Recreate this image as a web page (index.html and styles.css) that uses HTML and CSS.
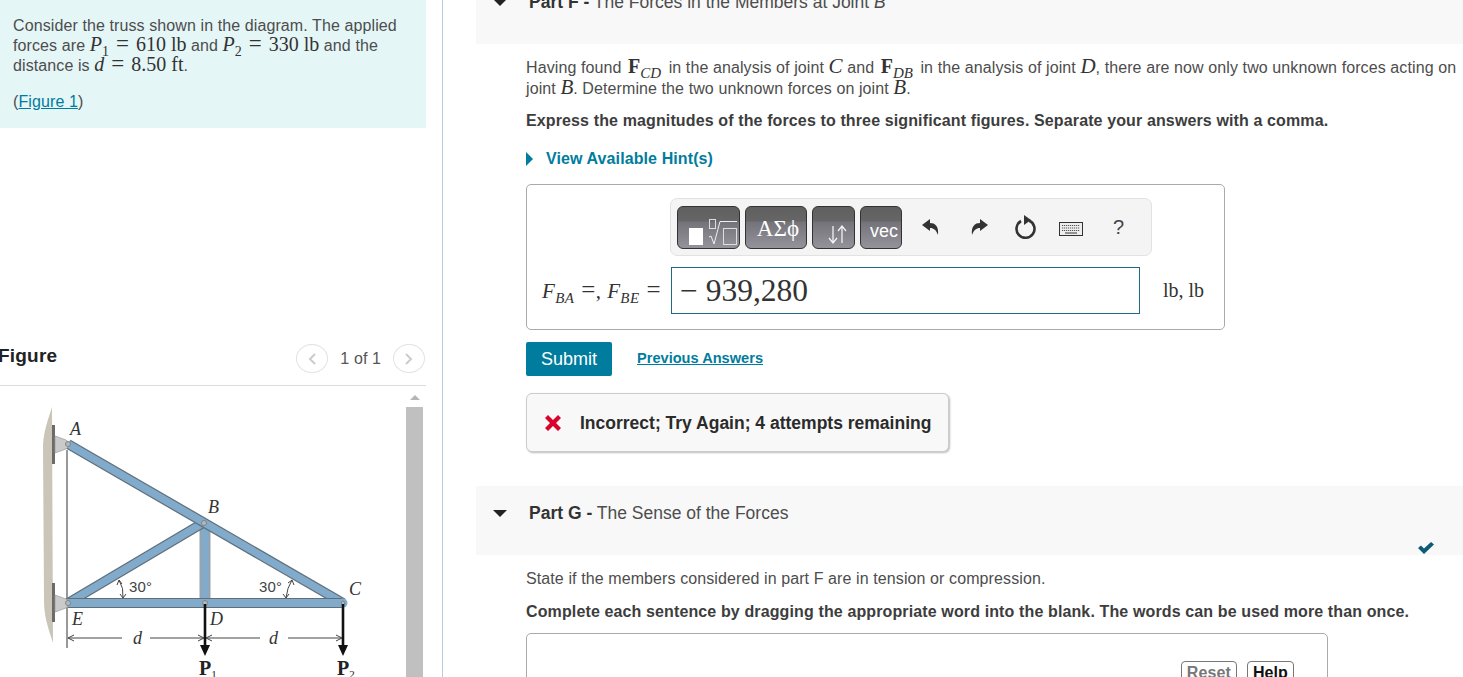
FILE: index.html
```html
<!DOCTYPE html>
<html>
<head>
<meta charset="utf-8" />
<title>Truss - Part F</title>
<link rel="stylesheet" href="styles.css">
</head>
<body>
<div class="page">

<div class="left">
  <div class="intro">
    <p>Consider the truss shown in the diagram. The applied forces are <span class="m"><i>P</i><sub>1</sub><span class="eq">=</span>610 lb</span> and <span class="m"><i>P</i><sub>2</sub><span class="eq">=</span>330 lb</span> and the distance is <span class="m"><i>d</i><span class="eq">=</span>8.50 ft</span>.</p>
    <p class="fig_link">(<a href="#">Figure 1</a>)</p>
  </div>
  <div class="fig_head">
    <h2>Figure</h2>
    <div class="pager">
      <span class="circle"><svg width="10" height="14" viewBox="0 0 10 14"><path d="M8 2 L3 7 L8 12" /></svg></span>
      <span class="count">1 of 1</span>
      <span class="circle"><svg width="10" height="14" viewBox="0 0 10 14"><path d="M2 2 L7 7 L2 12" /></svg></span>
    </div>
  </div>
  <div class="fig_body">
    <svg class="truss" width="406" height="291" viewBox="0 386 406 291">
      <!-- wall -->
      <path d="M52 407 L53 643 C47 625 44 615 44 600 L43 445 C44 430 48 420 52 407 Z" fill="#c9c5b8" />
      <rect x="52" y="425" width="3" height="39" fill="#6b6b6b" />
      <rect x="52" y="583" width="3" height="39" fill="#6b6b6b" />
      <!-- thin lines -->
      <line x1="67" y1="450" x2="67" y2="648" stroke="#333" stroke-width="1" />
      <!-- members -->
      <g fill="none" stroke-linecap="butt">
        <path d="M205 523 V603" stroke="#98a2a8" stroke-width="11" />
        <path d="M205 523 V603" stroke="#81aacb" stroke-width="7.500" />
        <path d="M68 603 L203 523" stroke="#5f6f7a" stroke-width="10" />
        <path d="M68 603 L203 523" stroke="#81aacb" stroke-width="7.600" />
        <path d="M68 444 L343 603" stroke="#5f6f7a" stroke-width="10" />
        <path d="M68 444 L343 603" stroke="#81aacb" stroke-width="7.600" />
        <path d="M68 603 H343" stroke="#5f6f7a" stroke-width="10" />
        <path d="M68 603 H343" stroke="#81aacb" stroke-width="8" />
      </g>
      <circle cx="343" cy="603" r="4.500" fill="#81aacb" />
      <path d="M55 436 L66 440 L71 444 L66 449 L55 453 Z" fill="#c9cbcb" stroke="#9a9a9a" stroke-width=".7" />
      <path d="M55 595 L66 599 L71 603 L66 608 L55 612 Z" fill="#c9cbcb" stroke="#9a9a9a" stroke-width=".7" />
      <g fill="#b5b9bb" stroke="#7d8487" stroke-width="1">
        <circle cx="68" cy="444" r="2.500" />
        <circle cx="68" cy="603" r="2.500" />
        <circle cx="204" cy="523" r="2.500" />
        <circle cx="205" cy="603" r="2.500" />
        <circle cx="343" cy="603" r="1.800" />
      </g>
      <!-- loads -->
      <g stroke="#111" stroke-width="2.600">
        <line x1="205" y1="604" x2="205" y2="648" />
        <line x1="343" y1="604" x2="343" y2="648" />
      </g>
      <path d="M200 645 H210 L205 656 Z" fill="#111" />
      <path d="M338 645 H348 L343 656 Z" fill="#111" />
      <!-- dimensions -->
      <g stroke="#444" stroke-width="1" fill="none">
        <path d="M68 638 H122 M150 638 H204 M206 638 H260 M288 638 H342" />
        <path d="M74 635 L68 638 L74 641 M198 635 L204 638 L198 641 M212 635 L206 638 L212 641 M336 635 L342 638 L336 641" />
        <path d="M119 580 Q124 588 123 598 M119 580 L117 585 M119 580 L122 584 M123 598 L120 594 M123 598 L126 594" />
        <path d="M292 580 Q287 588 286 598 M292 580 L288 583 M292 580 L294 585 M286 598 L283 594 M286 598 L289 594" />
      </g>
      <g class="lbl">
        <text x="70" y="435">A</text>
        <text x="208" y="513">B</text>
        <text x="349" y="595">C</text>
        <text x="210" y="625">D</text>
        <text x="72" y="625">E</text>
        <text x="133" y="644">d</text>
        <text x="269" y="644">d</text>
      </g>
      <g class="deg">
        <text x="129" y="592">30°</text>
        <text x="259" y="592">30°</text>
      </g>
      <g class="load">
        <text x="199" y="675">P<tspan class="ls" dy="3">1</tspan></text>
        <text x="337" y="675">P<tspan class="ls" dy="3">2</tspan></text>
      </g>
    </svg>
    <div class="scrollbar">
      <div class="up"></div>
      <div class="thumb"></div>
    </div>
  </div>
</div>

<div class="right">
  <div class="part_head">
    <span class="caret"></span>
    <span class="part_title"><b>Part F -</b> The Forces in the Members at Joint <i>B</i></span>
  </div>
  <div class="part_body">
    <p class="txt">Having found <span class="m vec_f"><b>F</b><sub><i>CD</i></sub></span> in the analysis of joint <span class="m big"><i>C</i></span> and <span class="m vec_f"><b>F</b><sub><i>DB</i></sub></span> in the analysis of joint <span class="m big"><i>D</i></span>, there are now only two unknown forces acting on joint <span class="m big"><i>B</i></span>. Determine the two unknown forces on joint <span class="m big"><i>B</i></span>.</p>
    <p class="instr">Express the magnitudes of the forces to three significant figures. Separate your answers with a comma.</p>
    <p class="hint"><span class="hint_arrow"></span><a href="#">View Available Hint(s)</a></p>

    <div class="answer">
      <div class="toolbar">
        <span class="tbtn w1">
          <svg width="61" height="41" viewBox="0 0 61 41">
            <rect x="11" y="21" width="14" height="17" fill="#fff" />
            <rect x="31.500" y="12.500" width="6" height="9" fill="none" stroke="#ddd" stroke-width="1" />
            <path d="M31 30 L33 29 L36 37 L42 14.500 H59" fill="none" stroke="#eee" stroke-width="1" />
            <rect x="45.500" y="21.500" width="13" height="16" fill="none" stroke="#ddd" stroke-width="1" />
          </svg>
        </span>
        <span class="tbtn w2"><span class="greek">ΑΣϕ</span></span>
        <span class="tbtn w3">
          <svg width="41" height="41" viewBox="0 0 41 41">
            <path d="M20 19 V36 M16 31 L20 36 L24 31 M29 36 V19 M25 24 L29 19 L33 24" fill="none" stroke="#f2f2f2" stroke-width="1.300" />
          </svg>
        </span>
        <span class="tbtn w4"><span class="vec">vec</span></span>
        <div class="tools">
          <svg class="tool" width="20" height="20" viewBox="0 0 20 20"><path d="M1 8 L9 2 V6 C14 6 18 9 17 18 C15 13 13 11 9 11 V14 Z" /></svg>
          <svg class="tool" width="20" height="20" viewBox="0 0 20 20"><path d="M19 8 L11 2 V6 C6 6 2 9 3 18 C5 13 7 11 11 11 V14 Z" /></svg>
          <svg class="tool" width="24" height="26" viewBox="0 0 24 26"><path class="ring" d="M15 6.500 A9 9 0 1 1 7 7" /><path d="M10 1 L17 6 L10 11 Z" /></svg>
          <svg class="tool kbd" width="24" height="16" viewBox="0 0 24 16">
            <rect x=".5" y="1.500" width="23" height="13" fill="#eee" stroke="#333" />
            <path d="M3 4.500 H21 M3 7 H21 M3 9.500 H21" stroke="#555" stroke-width="1.200" stroke-dasharray="1.200 .8" />
            <path d="M6 12 H18" stroke="#555" stroke-width="1.200" />
          </svg>
          <span class="qmark">?</span>
        </div>
      </div>
      <div class="input_row">
        <span class="math_label"><i>F</i><sub><i>BA</i></sub><span class="eq">=</span>, <i>F</i><sub><i>BE</i></sub><span class="eq">=</span></span>
        <div class="math_input">− 939,280</div>
        <span class="unit">lb, lb</span>
      </div>
    </div>

    <div class="actions">
      <button class="submit">Submit</button>
      <a href="#" class="prev">Previous Answers</a>
    </div>

    <div class="feedback">
      <svg width="18" height="18" viewBox="0 0 18 18"><path d="M1 4 L4 1 L9 6 L14 1 L17 4 L12 9 L17 14 L14 17 L9 12 L4 17 L1 14 L6 9 Z" fill="#d9042b" /></svg>
      <span>Incorrect; Try Again; 4 attempts remaining</span>
    </div>
  </div>

  <div class="part_head g">
    <span class="caret"></span>
    <span class="part_title"><b>Part G -</b> The Sense of the Forces</span>
    <svg class="check" width="18" height="14" viewBox="0 0 18 14"><path d="M1 7 L4 4.500 L7 7.500 L14 1 L17 3.500 L7 13 Z" fill="#0b5c74" /></svg>
  </div>
  <div class="part_body">
    <p class="txt">State if the members considered in part F are in tension or compression.</p>
    <p class="instr g_instr">Complete each sentence by dragging the appropriate word into the blank. The words can be used more than once.</p>
    <div class="drag_box">
      <span class="small_btn off">Reset</span>
      <span class="small_btn">Help</span>
    </div>
  </div>
</div>

</div>
</body>
</html>
```

FILE: styles.css
```css
* {
	margin: 0;
	padding: 0;
	box-sizing: border-box;
}
html, body {
	height: 677px;
	overflow: hidden;
	background: #fff;
}
body {
	font-family: "Liberation Sans", Arial, sans-serif;
	font-size: 16px;
	letter-spacing: .1px;
	color: #4d4d4d;
}
a {
	color: #007c9e;
}
.page {
	display: flex;
	width: 1463px;
	height: 677px;
	overflow: hidden;
}
.m {
	font-family: "Liberation Serif", serif;
	font-size: 20px;
	line-height: 0;
	letter-spacing: 0;
	color: #333;
}
.m.big {
	font-size: 21px;
}
.vec_f {
	margin: 0 3px 0 2px;
	font-size: 20px;
}
.vec_f sub {
	font-size: 15px;
}
.eq {
	font-size: 23px;
	margin: 0 7px;
}
sub {
	font-size: 70%;
	line-height: 0;
}

/* left column */
.left {
	flex: none;
	width: 443px;
	border-right: 1px solid #b9cde2;
	padding-right: 16px;
}
.intro {
	background: #e5f6f7;
	height: 128px;
	padding: 16px 20px 0 13px;
	line-height: 20px;
}
.fig_link {
	margin-top: 16px;
}
.fig_head {
	display: flex;
	justify-content: space-between;
	align-items: center;
	margin-top: 214px;
	height: 44px;
	padding: 0 1px 10px 0;
	border-bottom: 1px solid #ddd;
}
.fig_head h2 {
	font-size: 19px;
	letter-spacing: .2px;
	color: #222;
	margin-left: -2px;
	margin-bottom: 5px;
}
.pager {
	display: flex;
	align-items: center;
	gap: 12px;
}
.circle {
	display: flex;
	align-items: center;
	justify-content: center;
	width: 32px;
	height: 29px;
	border: 1px solid #e2e2e2;
	border-radius: 50%;
}
.circle path {
	fill: none;
	stroke: #ccc;
	stroke-width: 2;
}
.count {
	color: #555;
}
.fig_body {
	display: flex;
	height: 292px;
}
.truss {
	display: block;
	flex: none;
}
.lbl text {
	font: italic 18px "Liberation Serif", serif;
	fill: #333;
}
.deg text {
	font: 15px "Liberation Sans", sans-serif;
	fill: #444;
}
.load text {
	font: bold 20px "Liberation Serif", serif;
	fill: #222;
}
.load .ls {
	font-size: 11px;
	font-weight: normal;
}
.scrollbar {
	flex: none;
	width: 17px;
}
.up {
	height: 21px;
	position: relative;
}
.up:after {
	content: "";
	position: absolute;
	left: 4px;
	top: 9px;
	border-left: 5px solid transparent;
	border-right: 5px solid transparent;
	border-bottom: 5px solid #b5b5b5;
}
.thumb {
	height: 270px;
	background: #c0c0c0;
}

/* right column */
.right {
	flex: 1;
	margin-top: -25px;
	padding-left: 33px;
}
.part_head {
	position: relative;
	height: 69px;
	background: #f8f8f8;
	display: flex;
	align-items: flex-start;
	padding: 17px 0 0 53px;
	font-size: 17.500px;
	letter-spacing: 0;
	line-height: 20px;
	color: #4d4d4d;
}
.part_title b {
	color: #333;
}
.caret {
	position: absolute;
	left: 17px;
	top: 24px;
	border-left: 7px solid transparent;
	border-right: 7px solid transparent;
	border-top: 7px solid #222;
}
.check {
	position: absolute;
	left: 941px;
	top: 55px;
}
.part_body {
	padding-left: 50px;
}
.txt {
	padding-top: 13px;
	line-height: 21px;
}
.instr {
	margin-top: 11px;
	font-weight: bold;
	letter-spacing: .125px;
	color: #3d3d3d;
	line-height: 21px;
}
.hint {
	margin-top: 17px;
	font-weight: bold;
	line-height: 21px;
	display: flex;
	align-items: center;
}
.hint a {
	text-decoration: none;
}
.hint_arrow {
	border-top: 7px solid transparent;
	border-bottom: 7px solid transparent;
	border-left: 7px solid #007c9e;
	margin-right: 13px;
}
.answer {
	width: 699px;
	height: 146px;
	margin-top: 15px;
	border: 1px solid #aaa;
	border-radius: 5px;
	padding: 13px 0 0 143px;
}
.toolbar {
	display: flex;
	align-items: center;
	gap: 5px;
	width: 482px;
	height: 58px;
	background: #f4f4f4;
	border: 1px solid #e2e2e2;
	border-radius: 7px;
	padding: 0 0 0 6px;
}
.tbtn {
	display: flex;
	align-items: flex-end;
	justify-content: center;
	height: 43px;
	border: 1px solid #333;
	border-radius: 6px;
	color: #fff;
	overflow: hidden;
	background: linear-gradient(#5f5f5f 0, #666 14px, #74737a 15px, #94939b 100%);
}
.w1 { width: 63px; }
.w2 { width: 62px; }
.w3 { width: 43px; }
.w4 { width: 42px; }
.greek {
	font: 23px/38px "Liberation Serif", serif;
	padding-left: 4px;
}
.vec {
	font-size: 18px;
	letter-spacing: 0;
	line-height: 33px;
	padding-left: 6px;
}
.tools {
	display: flex;
	align-items: center;
	padding-left: 14px;
}
.tool {
	fill: #333;
	flex: none;
}
.tool:nth-child(1) { margin-right: 28px; }
.tool:nth-child(2) { margin-right: 25px; }
.tool:nth-child(3) { margin-right: 21px; }
.kbd { margin-right: 30px; margin-top: 4px; }
.ring {
	fill: none;
	stroke: #333;
	stroke-width: 2.600;
}
.qmark {
	font-size: 20px;
	color: #444;
}
.input_row {
	display: flex;
	align-items: center;
	margin: 11px 0 0 -143px;
}
.math_label {
	width: 144px;
	padding-right: 10px;
	text-align: right;
	font: 21px/24px "Liberation Serif", serif;
	letter-spacing: .4px;
	color: #333;
	white-space: nowrap;
}
.math_label sub {
	font-size: 15px;
}
.math_label .eq {
	font-size: 25px;
	line-height: 0;
	margin: 0 0 0 7px;
}
.math_input {
	width: 469px;
	height: 47px;
	border: 1px solid #1f6b85;
	padding-left: 8px;
	font: 31.500px/45px "Liberation Serif", serif;
	letter-spacing: 0;
	color: #333;
}
.unit {
	margin-left: 23px;
	font: 20px "Liberation Serif", serif;
	letter-spacing: 0;
	color: #333;
}
.actions {
	display: flex;
	align-items: center;
	gap: 25px;
	margin-top: 12px;
}
.submit {
	width: 86px;
	height: 34px;
	border: 0;
	border-radius: 2px;
	background: #007c9e;
	color: #fff;
	font: 18px "Liberation Sans", sans-serif;
}
.prev {
	font-weight: bold;
	font-size: 14.600px;
	letter-spacing: 0;
	margin-bottom: 2px;
}
.feedback {
	display: flex;
	align-items: center;
	gap: 18px;
	width: 423px;
	height: 59px;
	margin-top: 17px;
	padding: 1px 0 0 17px;
	background: #f8f8f8;
	border: 1px solid #ccc;
	border-radius: 6px;
	box-shadow: 1px 1px 2px #bbb;
	font-weight: bold;
	font-size: 17.500px;
	letter-spacing: 0;
	color: #2b2b2b;
	margin-bottom: 34px;
}
.g_instr {
	margin-top: 12px;
}
.drag_box {
	display: flex;
	justify-content: flex-end;
	gap: 10px;
	width: 802px;
	height: 60px;
	margin-top: 11px;
	padding: 27px 33px 0 0;
	border: 1px solid #aaa;
	border-radius: 5px;
}
.small_btn {
	height: 26px;
	padding: 1px 5px;
	border: 1px solid #777;
	border-radius: 4px;
	font-weight: bold;
	color: #111;
	line-height: 20px;
}
.small_btn.off {
	color: #777;
}
```
